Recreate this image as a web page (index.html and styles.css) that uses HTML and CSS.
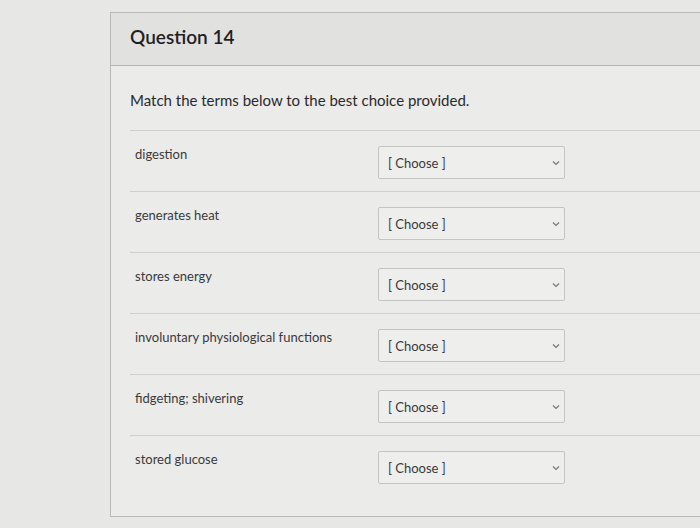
FILE: index.html
```html
<!doctype html>
<html lang="en">
  <head>
    <meta charset="UTF-8">
    <meta name="viewport" content="width=device-width, initial-scale=1.0">
    <title>Question 14</title>
    <link rel="stylesheet" href="styles.css">
  </head>
  <body>
    <div class="page">
      <div class="question">
        <div class="question-header">
          <h2>Question 14</h2>
        </div>
        <div class="question-body">
          <p class="prompt">Match the terms below to the best choice provided.</p>

          <!-- Matching rows -->
          <div class="answers">
            <div class="answer">
              <div class="term">digestion</div>
              <div class="select"><span>[ Choose ]</span><svg width="8" height="6" viewBox="0 0 8 6"><path d="M1 1.5 L4 4.5 L7 1.5" fill="none" stroke="#777" stroke-width="1.2"/></svg></div>
            </div>
            <div class="answer">
              <div class="term">generates heat</div>
              <div class="select"><span>[ Choose ]</span><svg width="8" height="6" viewBox="0 0 8 6"><path d="M1 1.5 L4 4.5 L7 1.5" fill="none" stroke="#777" stroke-width="1.2"/></svg></div>
            </div>
            <div class="answer">
              <div class="term">stores energy</div>
              <div class="select"><span>[ Choose ]</span><svg width="8" height="6" viewBox="0 0 8 6"><path d="M1 1.5 L4 4.5 L7 1.5" fill="none" stroke="#777" stroke-width="1.2"/></svg></div>
            </div>
            <div class="answer">
              <div class="term">involuntary physiological functions</div>
              <div class="select"><span>[ Choose ]</span><svg width="8" height="6" viewBox="0 0 8 6"><path d="M1 1.5 L4 4.5 L7 1.5" fill="none" stroke="#777" stroke-width="1.2"/></svg></div>
            </div>
            <div class="answer">
              <div class="term">fidgeting; shivering</div>
              <div class="select"><span>[ Choose ]</span><svg width="8" height="6" viewBox="0 0 8 6"><path d="M1 1.5 L4 4.5 L7 1.5" fill="none" stroke="#777" stroke-width="1.2"/></svg></div>
            </div>
            <div class="answer">
              <div class="term">stored glucose</div>
              <div class="select"><span>[ Choose ]</span><svg width="8" height="6" viewBox="0 0 8 6"><path d="M1 1.5 L4 4.5 L7 1.5" fill="none" stroke="#777" stroke-width="1.2"/></svg></div>
            </div>
          </div>
        </div>
      </div>
    </div>
  </body>
</html>
```

FILE: styles.css
```css
html, body {
  margin: 0;
  height: 100%;
  overflow: hidden;
}
body {
  font-family: Lato, "Open Sans", sans-serif;
  background-color: #e7e7e5;
  color: #2d2d2d;
}
.page {
  padding: 12px 0 0 110px;
}
.question {
  width: 590px;
  border: 1px solid #b9b9b7;
  border-right: none;
  background-color: #ebebea;
}
.question-header {
  height: 53px;
  display: flex;
  align-items: center;
  padding-left: 19px;
  padding-bottom: 5px;
  box-sizing: border-box;
  background-color: #e1e1df;
  border-bottom: 1px solid #b4b4b2;
}
.question-header h2 {
  margin: 0;
  font-size: 19px;
  font-weight: 600;
  color: #1f1f1f;
}
.question-body {
  padding: 25px 0 20px 19px;
}
.prompt {
  margin: 0 0 21px;
  font-size: 15px;
  color: #2a2a2a;
}
.answer {
  display: flex;
  border-top: 1px solid #cfcfcd;
  height: 61px;
  padding-top: 15px;
  box-sizing: border-box;
}
.term {
  width: 243px;
  padding-left: 5px;
  font-size: 13px;
  color: #3a3a3a;
}
.select {
  width: 187px;
  height: 33px;
  box-sizing: border-box;
  border: 1px solid #c4c4c2;
  border-radius: 2px;
  background-color: #eeeeed;
  display: flex;
  align-items: center;
  justify-content: space-between;
  padding: 0 4px 0 9px;
  font-size: 13px;
  color: #3a3a3a;
}
```
